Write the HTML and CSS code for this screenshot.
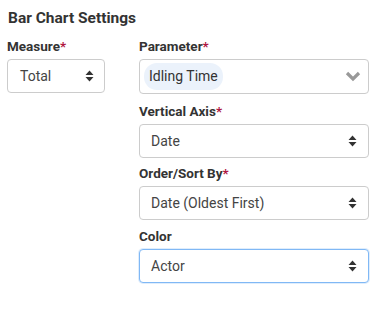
FILE: index.html
```html
<!DOCTYPE html>
<html>
<head>
<meta charset="utf-8">
<link rel="stylesheet" href="styles.css">
</head>
<body>
<div class="panel">
  <h2 class="title">Bar Chart Settings</h2>
  <div class="cols">
    <div class="col col-left">
      <div class="field">
        <label class="label">Measure<span class="req">*</span></label>
        <div class="select small">
          <span class="value">Total</span>
          <svg class="sort" width="9" height="12" viewBox="0 0 9 12"><path d="M4.5 0.5 L8.5 5 H0.5 Z M4.5 11.5 L8.5 7 H0.5 Z" fill="#333"/></svg>
        </div>
      </div>
    </div>
    <div class="col col-right">
      <div class="field multi-field">
        <label class="label">Parameter<span class="req">*</span></label>
        <div class="select multi">
          <span class="chip">Idling Time</span>
          <svg class="chev" width="16" height="11" viewBox="0 0 16 11"><path d="M2 2 L8 8 L14 2" fill="none" stroke="#999" stroke-width="3.2"/></svg>
        </div>
      </div>
      <div class="field">
        <label class="label">Vertical Axis<span class="req">*</span></label>
        <div class="select">
          <span class="value">Date</span>
          <svg class="sort" width="9" height="12" viewBox="0 0 9 12"><path d="M4.5 0.5 L8.5 5 H0.5 Z M4.5 11.5 L8.5 7 H0.5 Z" fill="#333"/></svg>
        </div>
      </div>
      <div class="field">
        <label class="label">Order/Sort By<span class="req">*</span></label>
        <div class="select">
          <span class="value">Date (Oldest First)</span>
          <svg class="sort" width="9" height="12" viewBox="0 0 9 12"><path d="M4.5 0.5 L8.5 5 H0.5 Z M4.5 11.5 L8.5 7 H0.5 Z" fill="#333"/></svg>
        </div>
      </div>
      <div class="field">
        <label class="label">Color</label>
        <div class="select focus">
          <span class="value">Actor</span>
          <svg class="sort" width="9" height="12" viewBox="0 0 9 12"><path d="M4.5 0.5 L8.5 5 H0.5 Z M4.5 11.5 L8.5 7 H0.5 Z" fill="#333"/></svg>
        </div>
      </div>
    </div>
  </div>
</div>
</body>
</html>
```

FILE: styles.css
```css
html, body {
  margin: 0;
  padding: 0;
  background: #fff;
}
body {
  font-family: Roboto, "Liberation Sans", sans-serif;
  color: #333;
}
.panel {
  padding: 8px 7px 0 7px;
}
.title {
  margin: 0 0 0 1px;
  font-size: 15.5px;
  font-weight: 700;
  line-height: 20px;
  color: #333;
}
.cols {
  display: flex;
  gap: 34px;
  margin-top: 10px;
}
.col-left {
  width: 98px;
  flex: none;
}
.col-right {
  flex: 1;
}
.field {
  display: flex;
  flex-direction: column;
  margin-bottom: 7.5px;
}
.multi-field {
  margin-bottom: 8.5px;
}
.label {
  font-size: 13.5px;
  font-weight: 700;
  line-height: 16px;
  color: #333;
  margin-bottom: 5px;
}
.req {
  color: #b0173f;
}
.select {
  box-sizing: border-box;
  height: 34px;
  border: 1px solid #ccc;
  border-radius: 4px;
  display: flex;
  align-items: center;
  justify-content: space-between;
  padding: 0 11px 0 11px;
  font-size: 14px;
  color: #444;
  background: #fff;
}
.select.small {
  padding-left: 12px;
  padding-right: 10px;
}
.select.multi {
  height: 35px;
  padding-left: 4px;
  padding-right: 7px;
}
.select.focus {
  border-color: #80b8f5;
  box-shadow: 0 0 0 1px rgba(128, 184, 245, 0.25);
}
.chip {
  background: #ebf2fb;
  border-radius: 13px;
  padding: 5px 5px;
  line-height: 17px;
  color: #333;
}
.sort {
  flex: none;
}
.chev {
  flex: none;
}
```
